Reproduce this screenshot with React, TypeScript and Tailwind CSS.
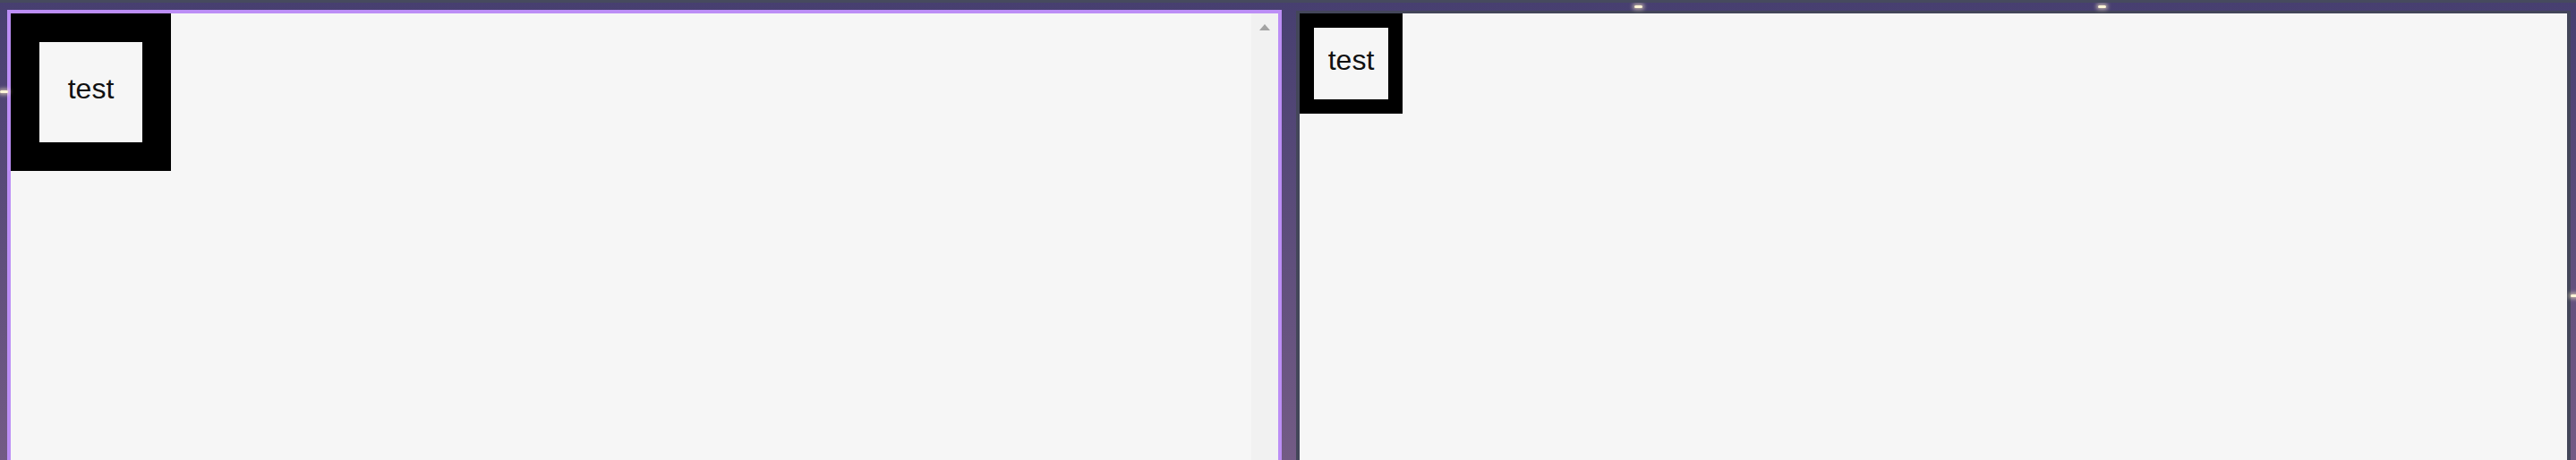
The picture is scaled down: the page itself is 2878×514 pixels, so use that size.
import React from 'react'

function Sparkle({ className }: { className: string }) {
  return (
    <span className={`pointer-events-none absolute h-[3px] w-[9px] rounded-full bg-[#fff6d8] shadow-[0_0_4px_2px_rgba(255,240,200,0.6)] ${className}`} />
  )
}

function TestBox({ big }: { big?: boolean }) {
  return (
    <div className={big ? 'w-fit border-[32px] border-black' : 'w-fit border-[16px] border-black'}>
      <div
        className={`flex items-center justify-center bg-[#f6f6f6] pb-2 text-[32px] leading-none text-[#111] ${
          big ? 'h-[112px] w-[115px]' : 'h-[80px] w-[83px]'
        }`}
      >
        test
      </div>
    </div>
  )
}

export default function App() {
  return (
    <div
      className="relative h-[514px] w-[2878px] overflow-hidden border-t-[3px] border-[#464a5e] bg-gradient-to-b from-[#473f70] to-[#735b85]"
      style={{ fontFamily: '"Liberation Sans", Arial, sans-serif' }}
    >
      <div className="flex h-full gap-4 pl-2 pr-[6px] pt-2">
        {/* panel izquierdo */}
        <div className="flex min-w-0 flex-1 border-l-4 border-r-4 border-t-4 border-[#bc8ef6] bg-[#f6f6f6]">
          <div className="flex-1">
            <TestBox big />
          </div>
          <div className="flex w-[30px] justify-center bg-[#f1f1f1] pt-3">
            <span className="h-0 w-0 border-x-[6.5px] border-b-[7px] border-x-transparent border-b-[#a3a3a3]" />
          </div>
        </div>

        {/* panel derecho */}
        <div className="mt-[1px] min-w-0 flex-1 border-l-4 border-r-4 border-t-[3px] border-[#434659] bg-[#f6f6f6]">
          <TestBox />
        </div>
      </div>

      <Sparkle className="left-[1826px] top-[3px]" />
      <Sparkle className="left-[2344px] top-[3px]" />
      <Sparkle className="left-0 top-[98px] w-[7px]" />
      <Sparkle className="left-[2872px] top-[326px] w-[6px]" />
    </div>
  )
}
